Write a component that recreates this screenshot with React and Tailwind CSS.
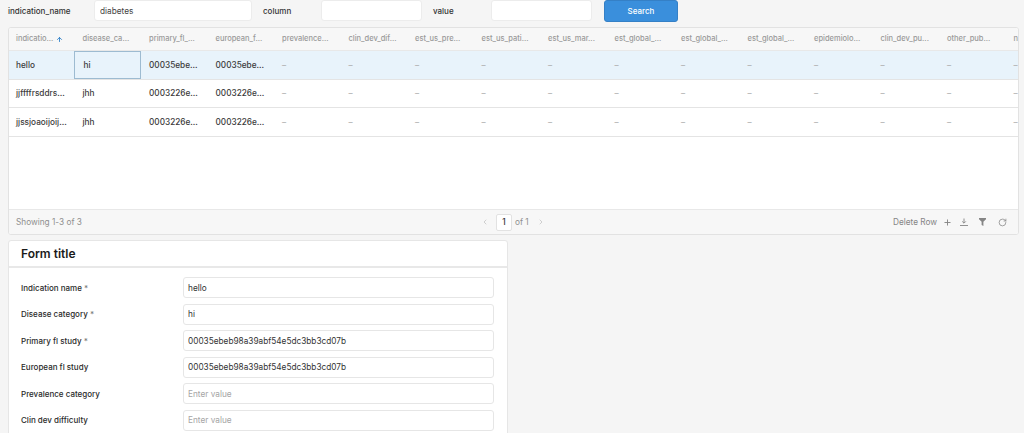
import React from 'react';
import { ArrowUp, ChevronLeft, ChevronRight, Plus, RotateCw } from 'lucide-react';

const COLUMNS = [
  'indicatio...', 'disease_ca...', 'primary_fl_...', 'european_f...', 'prevalence...', 'clin_dev_dif...',
  'est_us_pre...', 'est_us_pati...', 'est_us_mar...', 'est_global_...', 'est_global_...', 'est_global_...',
  'epidemiolo...', 'clin_dev_pu...', 'other_pub...', 'n',
];

const ROWS = [
  ['hello', 'hi', '00035ebe...', '00035ebe...'],
  ['jjffffrsddrs...', 'jhh', '0003226e...', '0003226e...'],
  ['jjssjoaoijoij...', 'jhh', '0003226e...', '0003226e...'],
];

const FIELDS = [
  { label: 'Indication name', required: true, value: 'hello' },
  { label: 'Disease category', required: true, value: 'hi' },
  { label: 'Primary fl study', required: true, value: '00035ebeb98a39abf54e5dc3bb3cd07b' },
  { label: 'European fl study', value: '00035ebeb98a39abf54e5dc3bb3cd07b' },
  { label: 'Prevalence category', value: '' },
  { label: 'Clin dev difficulty', value: '' },
];

function Row({ cells, index }) {
  const selected = index === 0;
  return (
    <div className={`flex h-[28.7px] -ml-[1.5px] border-b border-[#e4e4e4] ${selected ? 'bg-[#e8f3fb]' : 'bg-white'}`}>
      {COLUMNS.map((c, i) => {
        const value = cells[i];
        return (
          <div
            key={i}
            className={`w-[66.5px] shrink-0 pl-[8.5px] flex items-center text-[8.25px] ${value ? 'font-medium text-[#3a3a3a]' : 'text-[#a8a8a8]'} ${selected && i === 1 ? 'border border-[#9dbbd1] pl-[7.5px]' : ''}`}
          >
            {value || '–'}
          </div>
        );
      })}
    </div>
  );
}

function DownloadIcon() {
  return (
    <svg className="w-[8px] h-[8px]" viewBox="0 0 8 8" fill="none" stroke="#858585" strokeWidth="0.9">
      <path d="M4 0.5v4.5M2.2 3.4L4 5.2l1.8-1.8M0 7.5h8" />
    </svg>
  );
}

function FilterIcon() {
  return (
    <svg className="w-[7px] h-[8px]" viewBox="0 0 7 8" fill="#858585">
      <path d="M0 0h7v1.2L4.4 3.8V8L2.6 7V3.8L0 1.2z" />
    </svg>
  );
}

export default function App() {
  return (
    <div className="w-[1024px] h-[433px] overflow-hidden bg-[#f5f5f5] font-['Inter',sans-serif]">
      {/* search bar */}
      <div className="flex items-start h-[27px] pl-2 text-[8px] font-medium text-[#333]">
        <span className="w-[86px] h-[21px] flex items-center">indication_name</span>
        <input readOnly value="diabetes" className="w-[158px] h-[21px] px-[5px] bg-white border border-[#ececec] rounded-[3px] outline-none text-[8.25px] font-normal text-[#444]" />
        <span className="ml-[11px] w-[58px] h-[21px] flex items-center">column</span>
        <input readOnly className="w-[101px] h-[21px] bg-white border border-[#ececec] rounded-[3px] outline-none" />
        <span className="ml-[11px] w-[58px] h-[21px] flex items-center">value</span>
        <input readOnly className="w-[101px] h-[21px] bg-white border border-[#ececec] rounded-[3px] outline-none" />
        <button className="ml-[12px] w-[74px] h-[22px] bg-[#3a8fdc] border border-[#3580c6] rounded-[3px] text-white text-[8px] font-medium">Search</button>
      </div>

      {/* table */}
      <div className="mx-2 w-[1011px] h-[208px] flex flex-col border border-[#e2e2e2] rounded-[3px] overflow-hidden bg-white">
        <div className="flex h-[23px] -ml-[1.5px] shrink-0 bg-[#f7f7f7] border-b border-[#e8e8e8]">
          {COLUMNS.map((c, i) => (
            <div key={i} className="w-[66.5px] shrink-0 pl-[8.5px] flex items-center gap-[3px] text-[7.5px] font-medium text-[#9a9a9a]">
              {c}
              {i === 0 && <ArrowUp className="w-[7px] h-[7px] text-[#2f80c8]" strokeWidth={3} />}
            </div>
          ))}
        </div>
        <div className="flex-1 min-h-0">
          {ROWS.map((cells, i) => <Row key={i} cells={cells} index={i} />)}
        </div>
        <div className="flex items-center h-[25px] shrink-0 pl-[7px] pr-2 bg-[#f7f7f7] border-t border-[#e8e8e8] text-[8.25px] text-[#8f8f8f]">
          <span className="w-[465px]">Showing 1-3 of 3</span>
          <div className="flex items-center">
            <ChevronLeft className="w-[8px] h-[8px] text-[#bbb]" />
            <span className="ml-[7px] w-[16px] h-[17px] flex items-center justify-center bg-white border border-[#e2e2e2] rounded-[2px] text-[#333] font-medium">1</span>
            <span className="ml-[3px]">of 1</span>
            <ChevronRight className="ml-[8px] w-[8px] h-[8px] text-[#bbb]" />
          </div>
          <div className="ml-auto flex items-center text-[#858585]">
            <span>Delete Row</span>
            <Plus className="ml-[6px] w-[9px] h-[9px]" strokeWidth={2.5} />
            <span className="ml-[8px]"><DownloadIcon /></span>
            <span className="ml-[11px]"><FilterIcon /></span>
            <RotateCw className="ml-[12px] w-[9px] h-[9px] mr-[3px]" strokeWidth={2} />
          </div>
        </div>
      </div>

      {/* form */}
      <div className="mt-[5px] ml-2 w-[500px] h-[240px] bg-white border border-[#e6e6e6] rounded-t-[3px]">
        <div className="h-[27px] pl-[12px] flex items-center border-b-2 border-[#e8e8e8] text-[12px] font-semibold text-[#1a1a1a]">Form title</div>
        <div className="pt-[9px] pl-[12px] flex flex-col gap-[5.6px]">
          {FIELDS.map((f) => (
            <div key={f.label} className="flex items-center h-[21px]">
              <label className="w-[162px] text-[8px] font-medium text-[#2a2a2a]">
                {f.label}{f.required && <span className="text-[#777]"> *</span>}
              </label>
              <input
                readOnly
                value={f.value}
                placeholder="Enter value"
                className="w-[311px] h-[21px] px-[4px] bg-white border border-[#e6e6e6] rounded-[3px] outline-none text-[8.25px] text-[#333] placeholder:text-[#a5a5a5]"
              />
            </div>
          ))}
        </div>
      </div>
    </div>
  );
}
